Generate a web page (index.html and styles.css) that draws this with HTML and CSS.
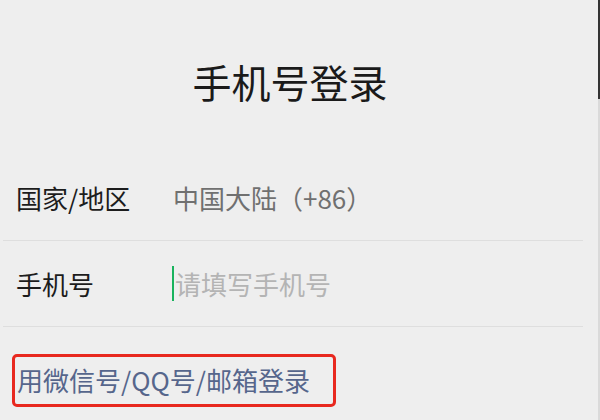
FILE: index.html
```html
<!DOCTYPE html>
<html lang="zh-CN">
<head>
<meta charset="utf-8">
<title>手机号登录</title>
<link rel="stylesheet" href="styles.css">
</head>
<body>
<div class="screen">
  <main class="page">
    <h1 class="title">手机号登录</h1>
    <div class="form">
      <div class="row">
        <span class="label">国家/地区</span>
        <span class="value">中国大陆（+86）</span>
      </div>
      <div class="row">
        <span class="label">手机号</span>
        <span class="input"><span class="cursor"></span><span class="placeholder">请填写手机号</span></span>
      </div>
    </div>
    <div class="alt">
      <a class="alt-link">用微信号/QQ号/邮箱登录</a>
    </div>
  </main>
  <div class="scrollbar"><div class="thumb"></div><div class="track"></div></div>
</div>
</body>
</html>
```

FILE: styles.css
```css
html, body {
  margin: 0;
  padding: 0;
}
body {
  background: #eeeeee;
  font-family: "Noto Sans CJK SC", "Noto Sans", sans-serif;
  width: 600px;
  height: 420px;
  overflow: hidden;
}
.screen {
  display: flex;
  height: 420px;
}
.page {
  flex: 1;
  display: flex;
  flex-direction: column;
}
.title {
  margin: 61px 0 0 0;
  padding-right: 18px;
  font-size: 39px;
  line-height: 40px;
  font-weight: 400;
  color: #1a1a1a;
  text-align: center;
}
.form {
  margin: 54px 15px 0 3px;
  display: flex;
  flex-direction: column;
}
.row {
  display: flex;
  align-items: center;
  height: 85px;
  border-bottom: 1px solid #dedede;
  padding-left: 13px;
  font-size: 26px;
  line-height: 30px;
}
.label {
  width: 157px;
  color: #1c1c1c;
}
.value {
  color: #707070;
}
.input {
  display: flex;
  align-items: center;
  margin-left: -1px;
}
.cursor {
  width: 2px;
  height: 35px;
  background: #19b35d;
  margin-right: 1px;
}
.placeholder {
  color: #b4b4b4;
}
.alt {
  margin: 27px 0 0 12px;
  display: flex;
}
.alt-link {
  box-sizing: border-box;
  width: 324px;
  height: 53px;
  border: 3px solid #e8281f;
  border-radius: 5px;
  display: flex;
  align-items: center;
  padding: 0 0 2px 2px;
  font-size: 26px;
  line-height: 30px;
  color: #56668c;
  text-decoration: none;
}
.scrollbar {
  width: 2px;
  display: flex;
  flex-direction: column;
}
.thumb {
  height: 99px;
  background: #333333;
}
.track {
  flex: 1;
  background: #dadada;
}
```
